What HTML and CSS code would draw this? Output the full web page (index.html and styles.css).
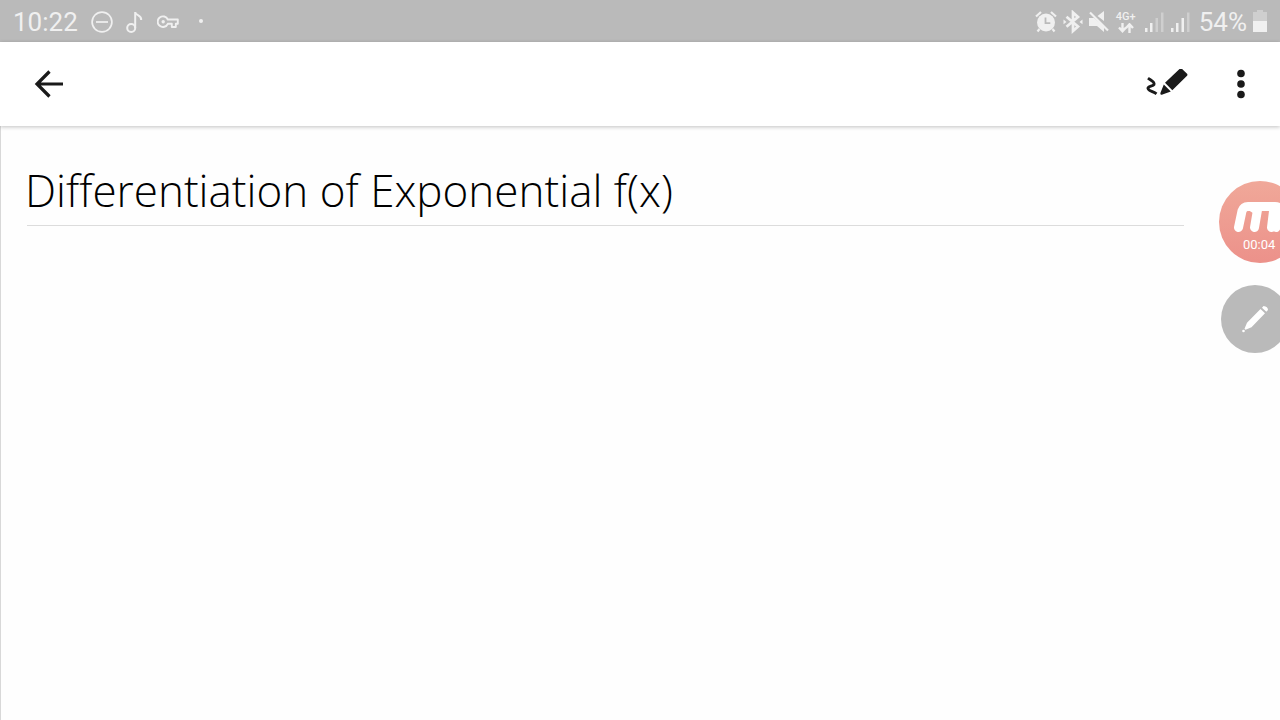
FILE: index.html
```html
<!DOCTYPE html>
<html lang="en">
<head>
<meta charset="utf-8">
<meta name="viewport" content="width=device-width, initial-scale=1">
<title>Differentiation of Exponential f(x)</title>
<link rel="stylesheet" href="styles.css">
</head>
<body>
<div class="status-bar">
  <div class="status-left">
    <span class="status-text">10:22</span>
    <svg width="22" height="24" viewBox="0 0 22 24" fill="none" stroke="currentColor" stroke-width="1.7"><circle cx="11" cy="12" r="9.9"/><path d="M5 12h12"/></svg>
    <svg width="18" height="24" viewBox="0 0 18 24" fill="none" stroke="currentColor" stroke-width="2"><circle cx="5.200" cy="18" r="4"/><path d="M9.200 18V2c0 4 6.500 2.500 6 8"/></svg>
    <svg width="22" height="24" viewBox="0 0 22 24" fill="none" stroke="currentColor" stroke-width="1.9" stroke-linejoin="round"><path d="M10.800 9.500H20.800V13.800H18.800V17H14.800V13.800H10.800A5.300 5.300 0 1 1 10.800 9.500Z"/><circle cx="6.200" cy="11.700" r="1.700" fill="currentColor" stroke="none"/></svg>
    <svg class="more-dot" width="6" height="24" viewBox="0 0 6 24" fill="currentColor"><circle cx="3" cy="11" r="2"/></svg>
  </div>
  <div class="status-right">
    <svg class="alarm" width="22" height="24" viewBox="0 0 22 24"><circle cx="11" cy="12.500" r="9" fill="currentColor"/><path d="M1 6.500 6 2M21 6.500 16 2M4.500 19l-2 2.500M17.500 19l2 2.500" fill="none" stroke="currentColor" stroke-width="2.200"/><path d="M10.500 7.500v5.700h4.800" fill="none" stroke="#bababa" stroke-width="1.800"/></svg>
    <svg class="bluetooth" width="20" height="24" viewBox="0 0 20 24" fill="none" stroke="currentColor" stroke-width="2.700"><path d="M3.500 6.700 15 16.500 10 21V2.500L15 7 3.500 16.800"/><path d="M.5 9.500v4.800l3-2.400zM19.500 9.500v4.800l-3-2.400z" fill="currentColor" stroke="none"/></svg>
    <svg class="mute" width="20" height="24" viewBox="0 0 20 24" fill="currentColor"><path d="M0 8h5l10 8.500V22l-7-6H0zM8.500 6 15 1v10z"/><path d="m1 2.500 18 18" fill="none" stroke="currentColor" stroke-width="2.200"/></svg>
    <div class="network">
      <span>4G+</span>
      <svg width="16" height="10" viewBox="0 0 16 10" fill="none" stroke="currentColor" stroke-width="2.400"><path d="M4.500 0v8M1 4.500 4.500 8.200 8 4.500M11.500 10V1.500M8 5l3.500-3.700L15 5"/></svg>
    </div>
    <svg class="signal" width="20" height="24" viewBox="0 0 20 24" fill="currentColor"><rect y="18" width="2.500" height="4"/><rect x="5" y="13" width="2.500" height="9"/><rect x="10.500" y="8" width="2.500" height="14" opacity=".4"/><rect x="16" y="2.500" width="2.500" height="19.500" opacity=".4"/></svg>
    <svg class="signal" width="20" height="24" viewBox="0 0 20 24" fill="currentColor"><rect y="18" width="2.500" height="4"/><rect x="5" y="13" width="2.500" height="9"/><rect x="10.500" y="8" width="2.500" height="14"/><rect x="16" y="2.500" width="2.500" height="19.500" opacity=".4"/></svg>
    <span class="status-text percent">54%</span>
    <svg width="16" height="24" viewBox="0 0 16 24" fill="currentColor"><path d="M5 0h6v2h4v9H1V2h4z" opacity=".4"/><path d="M1 11h14v11H1z"/></svg>
  </div>
</div>
<header class="toolbar">
  <button class="icon-button" type="button" aria-label="Back">
    <svg width="30" height="30" viewBox="0 0 30 30" fill="none" stroke="currentColor" stroke-width="3.200"><path d="M29 15H4M15.500 2.500 3 15 15.500 27.500"/></svg>
  </button>
  <div class="toolbar-actions">
    <button class="icon-button" type="button" aria-label="Draw">
      <svg width="42" height="30" viewBox="0 0 42 30" fill="currentColor"><path d="M2 9.200C5 11.500 9 13 8 15.500 7 17.500 1.500 17 2 19.500 2.500 22 7.500 22.500 10.500 24.800" fill="none" stroke="currentColor" stroke-width="2.900"/><path d="M33.500 0q1.300-1.300 2.600 0l4.700 4.500q1.300 1.200 0 2.500L26.300 21.200 19 13.700zM17.800 15.500l7 7-8.300 3q-2.800.8-1.900-1.900z"/></svg>
    </button>
    <button class="icon-button" type="button" aria-label="More options">
      <svg width="10" height="30" viewBox="0 0 10 30" fill="currentColor"><circle cx="5" cy="4.500" r="3.800"/><circle cx="5" cy="15" r="3.800"/><circle cx="5" cy="25.500" r="3.800"/></svg>
    </button>
  </div>
</header>
<main class="page">
  <h1 class="page-title">Differentiation of Exponential f(x)</h1>
</main>
<aside class="floating">
  <button class="recorder" type="button" aria-label="Recorder, 00:04">
    <svg width="56" height="32" viewBox="0 0 56 32" fill="none" stroke="#fff" stroke-width="9" stroke-linecap="round" stroke-linejoin="round"><path d="M5.500 26.500 9 10Q10.500 5.500 15 5.500H42Q48 5.500 47 11L43 26.500M25 6 21.500 26.500M41 6 38.500 26.500" /><path d="M12 7h10l-2 5z" fill="#fff" stroke="none"/></svg>
    <span class="record-time">00:04</span>
  </button>
  <button class="pen" type="button" aria-label="Pen">
    <svg width="28" height="28" viewBox="0 0 28 28" fill="#fff"><path d="M19.500 4 24 8.200 10.500 22.200l-6 2.500-1-1 2.500-6zM21 2.800 22.500 1q4.500.4 4.500 4L25.300 6.800z"/><circle cx="2.500" cy="26" r="1.300"/></svg>
  </button>
</aside>
</body>
</html>
```
FILE: styles.css
```css
* {
  box-sizing: border-box;
}

body {
  margin: 0;
  min-height: 100vh;
  display: flex;
  flex-direction: column;
  overflow-x: hidden;
  position: relative;
  background: #fefefe;
  color: #1a1a1a;
  font-family: Roboto, sans-serif;
}

svg {
  display: block;
  flex: none;
}

button {
  border: 0;
  padding: 0;
  background: none;
  color: inherit;
  font: inherit;
  cursor: pointer;
}

.status-bar {
  height: 42px;
  padding: 2px 12px 0 13px;
  display: flex;
  align-items: center;
  justify-content: space-between;
  background: #bababa;
  color: #f0f0f0;
}

.status-left,
.status-right {
  display: flex;
  align-items: center;
}

.status-left {
  gap: 13px;
}

.status-text {
  font-size: 26px;
  line-height: 32px;
}

.more-dot {
  margin-left: 6px;
}

.alarm,
.bluetooth,
.mute {
  margin-right: 6px;
}

.network {
  width: 22px;
  margin-right: 8px;
  display: flex;
  flex-direction: column;
  align-items: center;
  font-size: 11px;
  font-weight: 500;
  line-height: 12px;
}

.signal {
  margin-right: 6px;
}

.percent {
  margin: 0 5px 0 2px;
}

.toolbar {
  height: 84px;
  padding: 0 34px;
  display: flex;
  align-items: center;
  justify-content: space-between;
  background: #fff;
  box-shadow: 0 1px 4px rgba(0, 0, 0, 0.24);
  z-index: 1;
}

.toolbar-actions {
  display: flex;
  gap: 48px;
}

.page {
  flex: 1;
  padding: 34px 96px 0 26px;
  border-left: 1px solid #d8d8d8;
}

.page-title {
  margin: 0;
  padding-bottom: 4px;
  border-bottom: 1px solid #dcdcdc;
  color: #000;
  font-family: "Open Sans", sans-serif;
  font-size: 44px;
  font-weight: 300;
  line-height: 61px;
  text-indent: -2px;
}

.floating {
  position: absolute;
  top: 181px;
  right: 0;
  width: 61px;
  overflow: hidden;
  display: flex;
  flex-direction: column;
  gap: 22px;
}

.recorder,
.pen {
  flex: none;
  border-radius: 50%;
  display: flex;
  flex-direction: column;
  align-items: center;
}

.recorder {
  width: 82px;
  height: 82px;
  padding: 20px 0 0 14px;
  background: linear-gradient(#f0a899, #ec918a);
  color: #fff;
  align-items: flex-start;
}

.record-time {
  padding-left: 10px;
  font-size: 13px;
  line-height: 24px;
}

.pen {
  width: 68px;
  height: 68px;
  margin-left: 2px;
  justify-content: center;
  background: #bababa;
}
```
